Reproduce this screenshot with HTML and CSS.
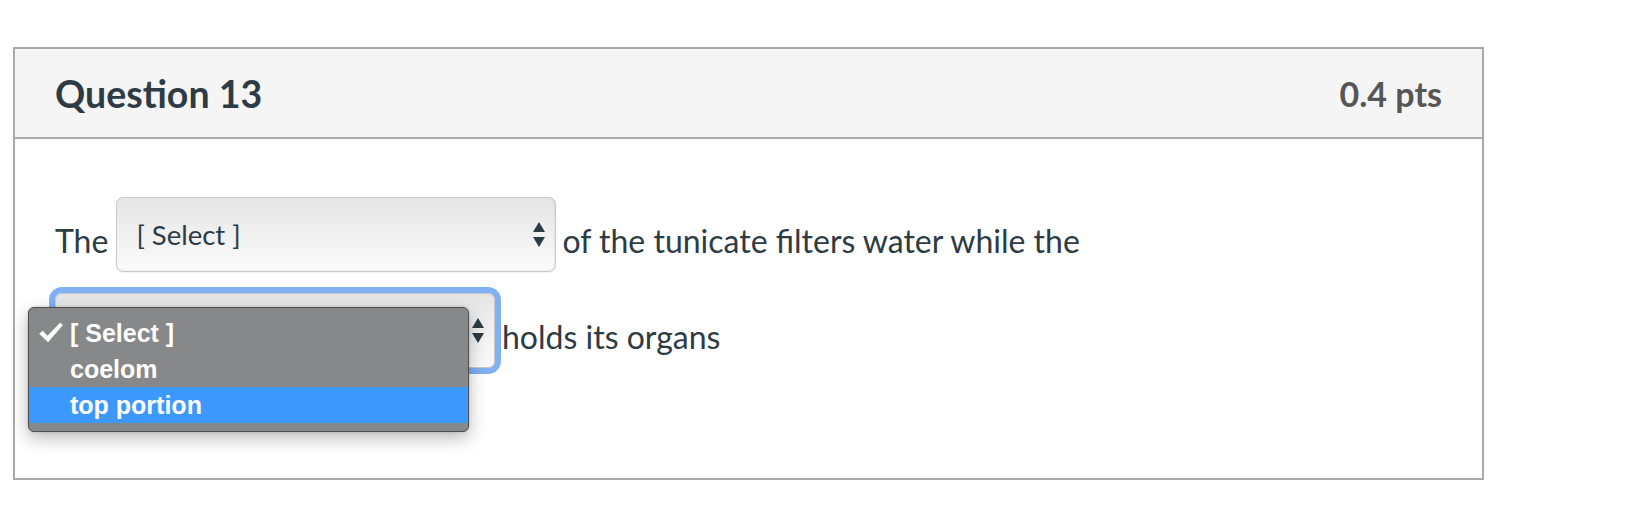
FILE: index.html
```html
<!DOCTYPE html>
<html lang="en">
<head>
<meta charset="utf-8">
<title>Question 13</title>
<link rel="stylesheet" href="styles.css">
</head>
<body>
<div class="question">
  <div class="q-header">
    <h2 class="q-title">Question 13</h2>
    <div class="q-points">0.4 pts</div>
  </div>
  <div class="q-body">
    <div class="q-line">
      <span class="q-text">The</span>
      <div class="select s1">
        <span class="select-value">[ Select ]</span>
        <svg class="arrows" width="12" height="25" viewBox="0 0 12 25"><polygon points="0,10 6,0 12,10"/><polygon points="0,15 12,15 6,25"/></svg>
      </div>
      <span class="q-text">of the tunicate filters water while the</span>
    </div>
    <div class="q-line">
      <div class="select-wrap">
        <div class="select focused">
          <span class="select-value">[ Select ]</span>
          <svg class="arrows" width="12" height="25" viewBox="0 0 12 25"><polygon points="0,10 6,0 12,10"/><polygon points="0,15 12,15 6,25"/></svg>
        </div>
        <ul class="menu">
          <li class="menu-item checked">
            <svg class="check" width="26" height="21" viewBox="0 0 24 20"><path d="M0.8 11.2 L4.2 8.4 L8.6 13.2 L20.6 0.6 L23.4 2.8 L9.2 19.4 Z"/></svg>
            [ Select ]
          </li>
          <li class="menu-item">coelom</li>
          <li class="menu-item active">top portion</li>
        </ul>
      </div>
      <span class="q-text">holds its organs</span>
    </div>
  </div>
</div>
</body>
</html>
```
FILE: styles.css
```css
html, body {
  margin: 0;
  padding: 0;
  background: #ffffff;
}
body {
  font-family: Lato, "Open Sans", "Liberation Sans", sans-serif;
  color: #2d3b45;
}
.question {
  margin: 47px 0 0 13px;
  width: 1471px;
  box-sizing: border-box;
  border: 2px solid #aaaaaa;
}
.q-header {
  height: 90px;
  box-sizing: border-box;
  background: #f5f5f5;
  border-bottom: 2px solid #aaaaaa;
  display: flex;
  align-items: center;
  justify-content: space-between;
  padding: 0 40px 0 40px;
}
.q-title {
  margin: 0;
  font-size: 37.5px;
  font-weight: 700;
  color: #2d3b45;
}
.q-points {
  font-size: 34px;
  font-weight: 700;
  color: #565656;
}
.q-body {
  padding: 47px 40px 100px 40px;
}
.q-line {
  display: flex;
  align-items: center;
  height: 96px;
}
.q-text {
  font-size: 32px;
  color: #2d3b45;
  padding-top: 12px;
  white-space: nowrap;
}
.select {
  width: 440px;
  height: 75px;
  box-sizing: border-box;
  border: 1px solid #c8c8c8;
  border-radius: 7px;
  background: linear-gradient(#e5e5e5, #fbfbfb);
  box-shadow: inset -1px -1px 2px rgba(0,0,0,0.06), 0 1px 1px rgba(0,0,0,0.06);
  display: flex;
  align-items: center;
  justify-content: space-between;
  padding: 0 10px 0 19px;
  font-size: 27.5px;
  color: #2d3b45;
}
.s1 {
  margin: 0 6px 0 8px;
}
.arrows {
  fill: #2d3b45;
  display: block;
}
.select-wrap {
  position: relative;
  margin-right: 7px;
}
.focused {
  box-shadow: 0 0 0 6px #80b1f3;
}
.menu {
  position: absolute;
  left: -27px;
  top: 14px;
  width: 441px;
  height: 125px;
  box-sizing: border-box;
  margin: 0;
  padding: 7px 0 0 0;
  list-style: none;
  background: #87888a;
  border: 1px solid #4e4e4e;
  border-radius: 6px;
  box-shadow: 0 6px 18px rgba(0,0,0,0.28), 0 0 3px rgba(0,0,0,0.15);
  overflow: hidden;
}
.menu-item {
  position: relative;
  height: 36px;
  line-height: 36px;
  padding-left: 41px;
  font-family: "Liberation Sans", Arial, sans-serif;
  font-size: 25px;
  font-weight: 700;
  color: #ffffff;
  white-space: nowrap;
}
.menu-item.active {
  background: #3c98fd;
}
.check {
  position: absolute;
  left: 9px;
  top: 7px;
  fill: #ffffff;
}
```
